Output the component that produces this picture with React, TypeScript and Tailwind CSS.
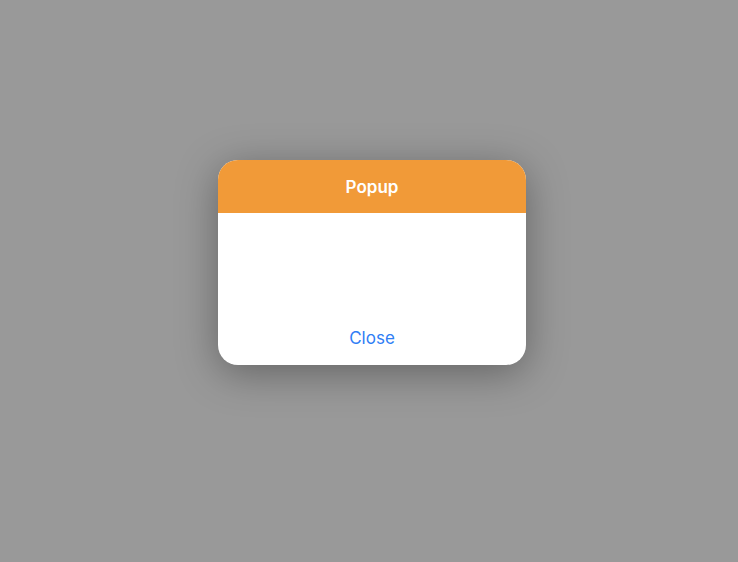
import React from 'react';

export default function App() {
  return (
    <div
      className="w-[738px] h-[562px] bg-[#999999] flex items-center justify-center pl-[6px] pb-[37px]"
      style={{ fontFamily: 'Inter, "Noto Sans", sans-serif' }}
    >
      <div className="w-[308px] h-[205px] bg-white rounded-[20px] overflow-hidden flex flex-col shadow-[0_8px_40px_rgba(0,0,0,0.35)]">
        <div className="h-[53px] pt-[2px] bg-[#f19a38] flex items-center justify-center">
          <span className="text-white text-[17px] font-semibold">Popup</span>
        </div>
        <div className="flex-1" />
        <button className="h-[50px] pb-[2px] flex items-center justify-center text-[#2f7ef5] text-[17px]">
          Close
        </button>
      </div>
    </div>
  );
}
